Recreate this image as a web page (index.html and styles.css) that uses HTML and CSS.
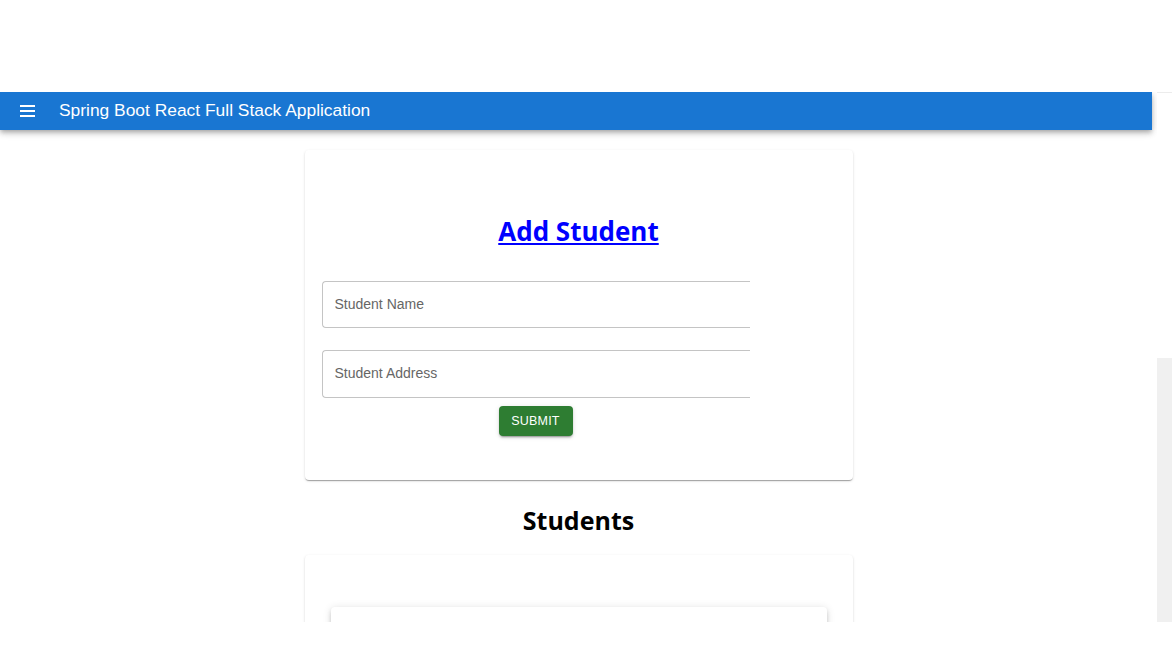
FILE: index.html
```html
<!DOCTYPE html>
<html lang="en">
<head>
    <meta charset="UTF-8">
    <meta name="viewport" content="width=device-width, initial-scale=1.0">
    <title>Spring Boot React Full Stack Application</title>
    <link rel="stylesheet" href="styles.css">
</head>
<body>
    <div class="top-space"></div>

    <div class="window">
        <div class="app">
            <!-- App bar -->
            <header class="appbar">
                <button class="menu-button" aria-label="menu">
                    <svg width="15" height="12" viewBox="0 0 15 12">
                        <rect x="0" y="0" width="15" height="2" fill="#fff"/>
                        <rect x="0" y="5" width="15" height="2" fill="#fff"/>
                        <rect x="0" y="10" width="15" height="2" fill="#fff"/>
                    </svg>
                </button>
                <div class="appbar-title">Spring Boot React Full Stack Application</div>
            </header>

            <main class="main">
                <div class="card add-card">
                    <h1><a href="#" class="heading-link">Add Student</a></h1>

                    <form class="student-form">
                        <div class="field">
                            <input type="text" placeholder="Student Name">
                        </div>
                        <div class="field">
                            <input type="text" placeholder="Student Address">
                        </div>
                        <div class="actions">
                            <button type="button" class="submit-button">Submit</button>
                        </div>
                    </form>
                </div>

                <h2>Students</h2>

                <div class="card list-card">
                    <div class="student-card"></div>
                </div>
            </main>
        </div>

        <div class="scrollbar">
            <div class="scroll-thumb"></div>
        </div>
    </div>
</body>
</html>
```

FILE: styles.css
```css
body {
    margin: 0;
    font-family: "Liberation Sans", Arial, sans-serif;
    background: #fff;
}
.top-space {
    height: 92px;
}
.window {
    display: flex;
    height: 530px;
    overflow: hidden;
}
.app {
    width: 1157px;
    flex: none;
    overflow: hidden;
}
.scrollbar {
    width: 15px;
    flex: none;
    border-top: 1px solid #ececec;
}
.scroll-thumb {
    margin-top: 265px;
    height: 400px;
    background-color: #f0f0f0;
}

/* app bar */
.appbar {
    width: 1152px;
    height: 38px;
    background-color: #1976d2;
    display: flex;
    align-items: center;
    box-shadow: 0 2px 4px -1px rgba(0,0,0,0.2), 0 4px 5px 0 rgba(0,0,0,0.14), 0 1px 10px 0 rgba(0,0,0,0.12);
    position: relative;
}
.menu-button {
    background: none;
    border: none;
    padding: 0;
    margin-left: 20px;
    width: 15px;
    height: 12px;
    display: flex;
}
.appbar-title {
    margin-left: 24px;
    margin-bottom: 1px;
    color: #fff;
    font-size: 17.4px;
}

/* content */
.main {
    display: flex;
    flex-direction: column;
    align-items: center;
}
.card {
    width: 548px;
    box-sizing: border-box;
    background: #fff;
    border-radius: 4px;
    box-shadow: 0 2px 1px -1px rgba(0,0,0,0.2), 0 1px 1px 0 rgba(0,0,0,0.14), 0 1px 3px 0 rgba(0,0,0,0.12);
}
.add-card {
    margin-top: 20px;
    padding: 17px 17px 44px;
}
h1 {
    margin: 46px 0 32px;
    text-align: center;
    font-family: "Open Sans", sans-serif;
    font-size: 26px;
    line-height: 36px;
    font-weight: 700;
}
.heading-link {
    color: #0000ff;
}
.student-form {
    width: 428px;
}
.field {
    margin-bottom: 22px;
}
.field input {
    display: block;
    width: 100%;
    height: 47px;
    box-sizing: border-box;
    border: 1px solid #c4c4c4;
    border-right: none;
    border-radius: 4px 0 0 4px;
    padding: 0 12px 2px;
    font-family: "Liberation Sans", Arial, sans-serif;
    font-size: 14px;
    color: #333;
    outline: none;
}
.field:nth-child(2) {
    margin-bottom: 8px;
}
.field:nth-child(2) input {
    height: 48px;
}
.field input::placeholder {
    color: #666;
}
.actions {
    display: flex;
    justify-content: center;
}
.submit-button {
    background-color: #2e7d32;
    color: #fff;
    border: none;
    border-radius: 4px;
    height: 30px;
    width: 74px;
    padding: 0;
    font-family: "Liberation Sans", Arial, sans-serif;
    font-size: 12.5px;
    text-transform: uppercase;
    letter-spacing: 0.2px;
    cursor: pointer;
    box-shadow: 0 3px 1px -2px rgba(0,0,0,0.2), 0 2px 2px 0 rgba(0,0,0,0.14), 0 1px 5px 0 rgba(0,0,0,0.12);
}
h2 {
    margin: 25px 0 20px;
    font-family: "Open Sans", sans-serif;
    font-size: 25px;
    line-height: 30px;
    font-weight: 700;
    color: #000;
}
.list-card {
    padding: 52px 26px 0;
    height: 300px;
}
.student-card {
    height: 200px;
    border-radius: 4px;
    background: #fff;
    box-shadow: 0 3px 3px -2px rgba(0,0,0,0.2), 0 3px 4px 0 rgba(0,0,0,0.14), 0 1px 8px 0 rgba(0,0,0,0.12);
}
```
